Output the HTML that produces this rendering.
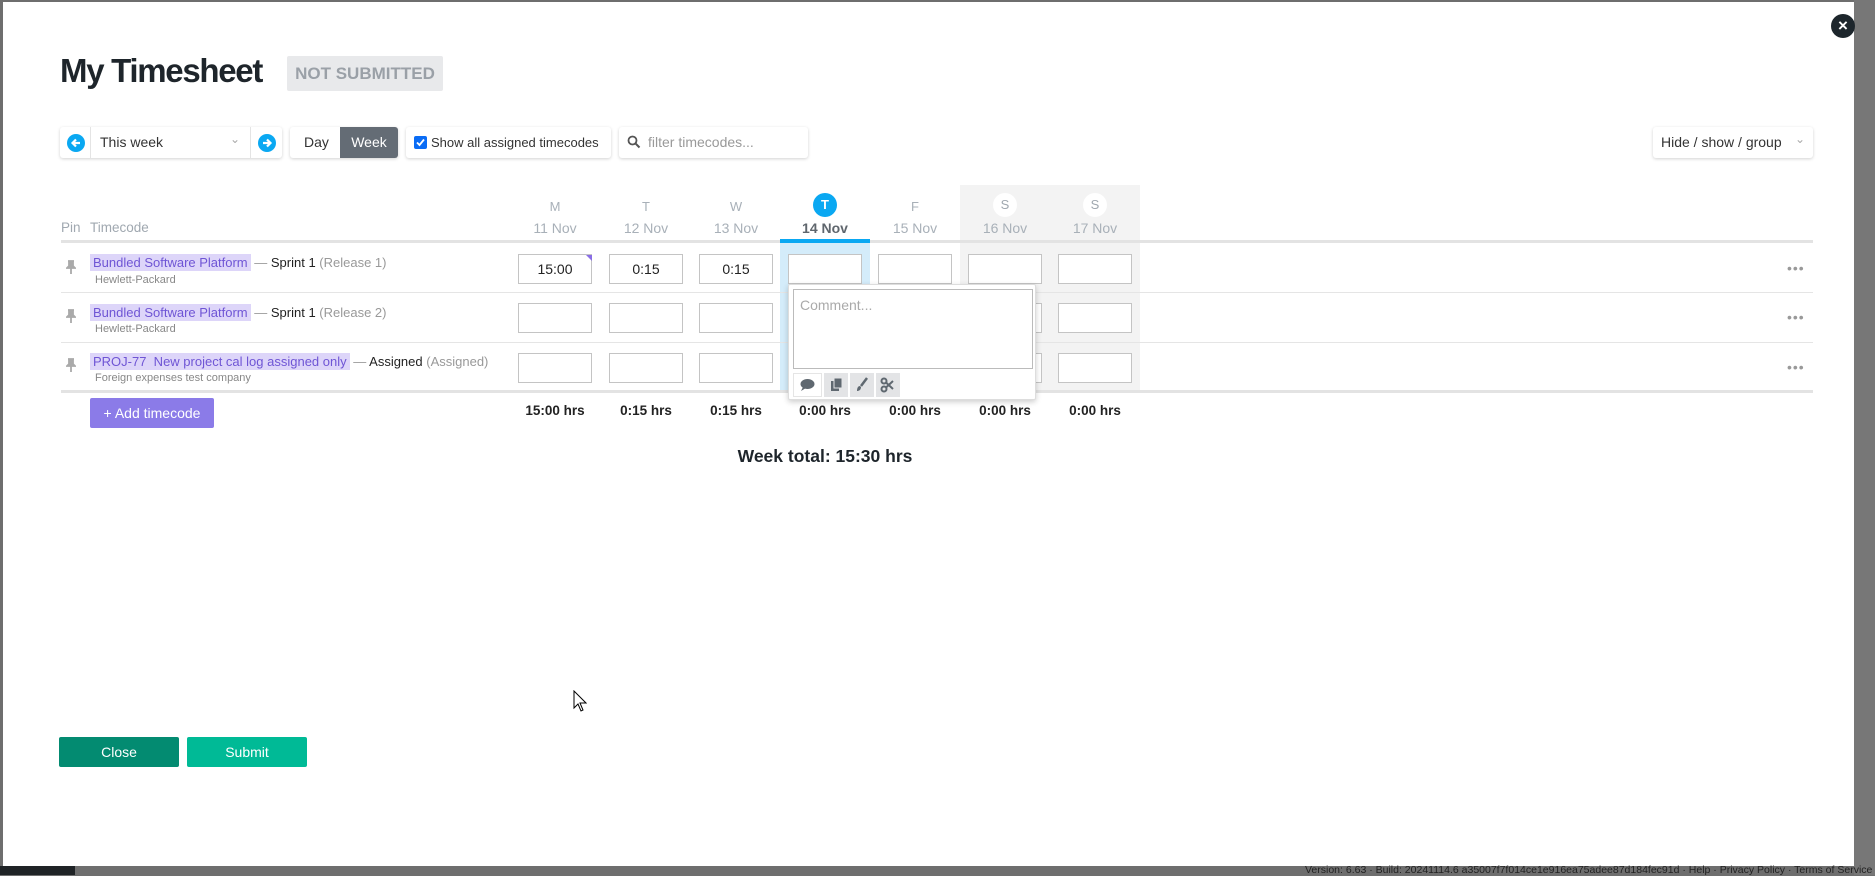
<!DOCTYPE html>
<html><head><meta charset="utf-8"><style>
*{box-sizing:border-box;margin:0;padding:0}
body{width:1875px;height:875px;overflow:hidden;background:#6e6e6e;font-family:"Liberation Sans",Arial,sans-serif;color:#222;position:relative}
.modal{position:absolute;left:3px;top:2px;width:1851px;height:864px;background:#fff}
.abs{position:absolute}
.footer{position:absolute;left:1305px;top:864px;font-size:10.5px;color:#222;white-space:nowrap}
.grp{position:absolute;top:127px;height:31px;background:#fff;border-radius:3px;box-shadow:0 1px 3px rgba(0,0,0,.18);font-size:14px;color:#333}
.circ{position:absolute;top:7px;width:18px;height:18px;border-radius:50%;background:#0aa8f2}
.inp{position:absolute;width:74px;height:30px;border:1px solid #c4c4c4;background:#fff;font-size:14px;text-align:center;line-height:28px;color:#222}
.lab{position:absolute;font-size:13px;white-space:nowrap}
.hl{background:#ddd5f9;color:#6f55d5;padding:1px 3px}
.sub{position:absolute;font-size:11px;color:#888;white-space:nowrap}
.pin{position:absolute;left:66px;width:10px;height:14px}
.dh{position:absolute;width:90px;text-align:center;font-size:14px;color:#a8b0b8}
.tot{position:absolute;width:90px;text-align:center;font-size:13.5px;font-weight:bold;top:403px}
.dots{position:absolute;left:1787px;font-size:14px;color:#999;letter-spacing:1px}
</style></head><body>
<div class="modal"></div>
<div class="abs" style="left:1854px;top:0;width:21px;height:875px;background:#777"></div>
<div class="abs" style="left:0;top:866px;width:75px;height:9px;background:#1f2326"></div>
<div class="footer">Version: 6.63 · Build: 20241114.6 a35007f7f014ce1e916ea75adee87d184fec91d · Help · Privacy Policy · Terms of Service</div>

<div class="abs" style="left:1831px;top:14px;width:24px;height:24px;border-radius:50%;background:#1d262c;color:#fff;text-align:center;line-height:23px;font-size:17px;font-weight:bold">×</div>

<div class="abs" style="left:60px;top:52px;font-size:33px;font-weight:bold;color:#1e252b;letter-spacing:-1.3px">My Timesheet</div>
<div class="abs" style="left:287px;top:56px;width:156px;height:35px;background:#e8e9eb;border-radius:2px;color:#9aa0a7;font-size:17px;font-weight:bold;text-align:center;line-height:35px">NOT SUBMITTED</div>

<div class="grp" style="left:60px;width:222px">
  <div class="circ" style="left:7px"><svg width="18" height="18" viewBox="0 0 18 18"><path d="M13 9H6M9 5.5L5.5 9 9 12.5" stroke="#fff" stroke-width="2.2" fill="none"/></svg></div>
  <div class="abs" style="left:30px;top:0;width:1px;height:31px;background:#e4e4e4"></div>
  <div class="abs" style="left:40px;top:7px">This week</div>
  <div class="abs" style="left:170px;top:5px;color:#aaa;font-size:12px">⌄</div>
  <div class="abs" style="left:190px;top:0;width:1px;height:31px;background:#e4e4e4"></div>
  <div class="circ" style="left:198px"><svg width="18" height="18" viewBox="0 0 18 18"><path d="M5 9H12M9 5.5L12.5 9 9 12.5" stroke="#fff" stroke-width="2.2" fill="none"/></svg></div>
</div>
<div class="grp" style="left:290px;width:108px">
  <div class="abs" style="left:14px;top:7px">Day</div>
  <div class="abs" style="left:50px;top:0;width:58px;height:31px;background:#646c75;color:#fff;text-align:center;line-height:31px;border-radius:0 3px 3px 0">Week</div>
</div>
<div class="grp" style="left:406px;width:205px">
  <div class="abs" style="left:8px;top:9px;width:13px;height:13px;background:#0a6cf5;border-radius:2px"><svg width="13" height="13" viewBox="0 0 13 13"><path d="M3 6.5L5.5 9 10 3.5" stroke="#fff" stroke-width="1.8" fill="none"/></svg></div>
  <div class="abs" style="left:25px;top:8px;white-space:nowrap;font-size:13px">Show all assigned timecodes</div>
</div>
<div class="grp" style="left:619px;width:189px">
  <svg class="abs" style="left:8px;top:8px" width="14" height="14" viewBox="0 0 14 14"><circle cx="5.5" cy="5.5" r="4" stroke="#555" stroke-width="1.8" fill="none"/><path d="M8.5 8.5L12.5 12.5" stroke="#555" stroke-width="2"/></svg>
  <div class="abs" style="left:29px;top:7px;color:#999">filter timecodes...</div>
</div>
<div class="grp" style="left:1653px;width:160px">
  <div class="abs" style="left:8px;top:7px;white-space:nowrap">Hide / show / group</div>
  <div class="abs" style="left:142px;top:5px;color:#aaa;font-size:12px">⌄</div>
</div>

<div class="abs" style="left:960px;top:185px;width:180px;height:205px;background:#f3f3f3"></div>
<div class="abs" style="left:780px;top:243px;width:90px;height:147px;background:#d4ecfa"></div>
<div class="abs" style="left:61px;top:240px;width:1752px;height:3px;background:#e3e3e3"></div>
<div class="abs" style="left:780px;top:239px;width:90px;height:4px;background:#0aa8f2"></div>
<div class="abs" style="left:61px;top:292px;width:1752px;height:1px;background:#e5e5e5"></div>
<div class="abs" style="left:61px;top:342px;width:1752px;height:1px;background:#e5e5e5"></div>
<div class="abs" style="left:61px;top:390px;width:1752px;height:3px;background:#e3e3e3"></div>

<div class="abs" style="left:61px;top:220px;font-size:13.5px;color:#a0a8b0">Pin</div>
<div class="abs" style="left:90px;top:220px;font-size:13.5px;color:#a0a8b0">Timecode</div>
<div class="dh" style="left:510px;top:199px;font-size:13px">M</div><div class="dh" style="left:510px;top:220px">11 Nov</div>
<div class="dh" style="left:601px;top:199px;font-size:13px">T</div><div class="dh" style="left:601px;top:220px">12 Nov</div>
<div class="dh" style="left:691px;top:199px;font-size:13px">W</div><div class="dh" style="left:691px;top:220px">13 Nov</div>
<div class="abs" style="left:813px;top:193px;width:24px;height:24px;border-radius:50%;background:#0aa8f2;color:#fff;text-align:center;line-height:24px;font-size:13px;font-weight:bold">T</div>
<div class="dh" style="left:780px;top:220px;color:#5f666d;font-weight:bold">14 Nov</div>
<div class="dh" style="left:870px;top:199px;font-size:13px">F</div><div class="dh" style="left:870px;top:220px">15 Nov</div>
<div class="abs" style="left:993px;top:193px;width:24px;height:24px;border-radius:50%;background:#fff;color:#a0a8b0;text-align:center;line-height:24px;font-size:13px">S</div>
<div class="dh" style="left:960px;top:220px">16 Nov</div>
<div class="abs" style="left:1083px;top:193px;width:24px;height:24px;border-radius:50%;background:#fff;color:#a0a8b0;text-align:center;line-height:24px;font-size:13px">S</div>
<div class="dh" style="left:1050px;top:220px">17 Nov</div>

<svg class="pin" style="top:260px" viewBox="0 0 10 14"><path d="M2 1h6M3 1v5L1 8h8L7 6V1M5 8v6" stroke="#aaa" stroke-width="1.8" fill="#aaa"/></svg>
<div class="lab" style="left:90px;top:255px"><span class="hl">Bundled Software Platform</span> <span style="color:#999">—</span> Sprint 1 <span style="color:#999">(Release 1)</span></div>
<div class="sub" style="left:95px;top:274px">Hewlett-Packard</div>

<svg class="pin" style="top:309px" viewBox="0 0 10 14"><path d="M2 1h6M3 1v5L1 8h8L7 6V1M5 8v6" stroke="#aaa" stroke-width="1.8" fill="#aaa"/></svg>
<div class="lab" style="left:90px;top:305px"><span class="hl">Bundled Software Platform</span> <span style="color:#999">—</span> Sprint 1 <span style="color:#999">(Release 2)</span></div>
<div class="sub" style="left:95px;top:323px">Hewlett-Packard</div>

<svg class="pin" style="top:358px" viewBox="0 0 10 14"><path d="M2 1h6M3 1v5L1 8h8L7 6V1M5 8v6" stroke="#aaa" stroke-width="1.8" fill="#aaa"/></svg>
<div class="lab" style="left:90px;top:354px"><span class="hl">PROJ-77&nbsp; New project cal log assigned only</span> <span style="color:#999">—</span> Assigned <span style="color:#999">(Assigned)</span></div>
<div class="sub" style="left:95px;top:372px">Foreign expenses test company</div>

<div class="inp" style="left:518px;top:254px">15:00</div>
<div class="abs" style="left:586px;top:255px;width:0;height:0;border-left:6px solid transparent;border-top:6px solid #8a6ee6"></div>
<div class="inp" style="left:609px;top:254px">0:15</div>
<div class="inp" style="left:699px;top:254px">0:15</div>
<div class="inp" style="left:788px;top:254px"></div>
<div class="inp" style="left:878px;top:254px"></div>
<div class="inp" style="left:968px;top:254px"></div>
<div class="inp" style="left:1058px;top:254px"></div>

<div class="inp" style="left:518px;top:303px"></div><div class="inp" style="left:609px;top:303px"></div><div class="inp" style="left:699px;top:303px"></div><div class="inp" style="left:968px;top:303px"></div><div class="inp" style="left:1058px;top:303px"></div>
<div class="inp" style="left:518px;top:353px"></div><div class="inp" style="left:609px;top:353px"></div><div class="inp" style="left:699px;top:353px"></div><div class="inp" style="left:968px;top:353px"></div><div class="inp" style="left:1058px;top:353px"></div>

<div class="dots" style="top:260px">•••</div>
<div class="dots" style="top:309px">•••</div>
<div class="dots" style="top:359px">•••</div>

<div class="abs" style="left:788px;top:284px;width:248px;height:116px;background:#fff;border:1px solid #ddd;border-radius:2px;box-shadow:0 2px 6px rgba(0,0,0,.2)">
  <div class="abs" style="left:4px;top:4px;width:240px;height:80px;border:1px solid #bbb;font-size:14px;color:#aaa;padding:7px 6px">Comment...</div>
  <div class="abs" style="left:4px;top:88px;width:29px;height:24px;border:1px solid #e5e5e5;background:#fff"><svg width="27" height="22" viewBox="0 0 27 22"><ellipse cx="13.5" cy="10" rx="7" ry="5" fill="#5f6870"/><path d="M9 13l-2 4 5-3" fill="#5f6870"/></svg></div>
  <div class="abs" style="left:35px;top:88px;width:24px;height:24px;background:#e3e4e6"><svg width="24" height="24" viewBox="0 0 24 24"><rect x="7" y="8" width="8" height="10" fill="#5f6870"/><rect x="10" y="5" width="8" height="10" fill="#5f6870" stroke="#e3e4e6"/></svg></div>
  <div class="abs" style="left:61px;top:88px;width:24px;height:24px;background:#e3e4e6"><svg width="24" height="24" viewBox="0 0 24 24"><path d="M17 5L11 13" stroke="#5f6870" stroke-width="2.5"/><path d="M10 13c-2 0-3 2-3 5 2 0 4-1 4-4z" fill="#5f6870"/></svg></div>
  <div class="abs" style="left:87px;top:88px;width:24px;height:24px;background:#e3e4e6"><svg width="24" height="24" viewBox="0 0 24 24"><circle cx="8" cy="8" r="2.5" stroke="#5f6870" stroke-width="2" fill="none"/><circle cx="8" cy="16" r="2.5" stroke="#5f6870" stroke-width="2" fill="none"/><path d="M10 9.5L17 16M10 14.5L17 8" stroke="#5f6870" stroke-width="2"/></svg></div>
</div>

<div class="abs" style="left:90px;top:398px;width:124px;height:30px;background:#8b7be8;border-radius:2px;color:#fff;font-size:14px;text-align:center;line-height:30px">+ Add timecode</div>
<div class="tot" style="left:510px">15:00 hrs</div>
<div class="tot" style="left:601px">0:15 hrs</div>
<div class="tot" style="left:691px">0:15 hrs</div>
<div class="tot" style="left:780px">0:00 hrs</div>
<div class="tot" style="left:870px">0:00 hrs</div>
<div class="tot" style="left:960px">0:00 hrs</div>
<div class="tot" style="left:1050px">0:00 hrs</div>
<div class="abs" style="left:625px;top:446px;width:400px;text-align:center;font-size:17.5px;font-weight:bold;color:#1e252b">Week total: 15:30 hrs</div>

<svg class="abs" style="left:573px;top:690px" width="14" height="22" viewBox="0 0 14 22"><path d="M1 1v17l4-4 3 7 2-1-3-7h6z" fill="#fff" stroke="#000" stroke-width="1"/></svg>

<div class="abs" style="left:59px;top:737px;width:120px;height:30px;background:#038b71;border-radius:2px;color:#fff;font-size:14px;text-align:center;line-height:30px">Close</div>
<div class="abs" style="left:187px;top:737px;width:120px;height:30px;background:#00ba96;border-radius:2px;color:#fff;font-size:14px;text-align:center;line-height:30px">Submit</div>
</body></html>
